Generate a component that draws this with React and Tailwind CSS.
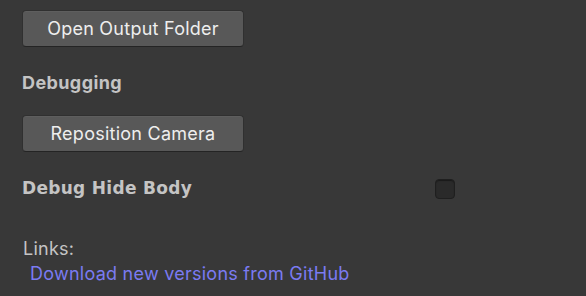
import React, { useState } from 'react';

const UnityButton = ({ children }) => (
  <button
    type="button"
    className="w-[222px] h-[37px] rounded-[4px] bg-[#585858] border border-[#303030] border-b-[#242424] text-[#eeeeee] text-[18px] tracking-[0.25px] leading-none shadow-[inset_0_1px_0_rgba(255,255,255,0.04)]"
  >
    {children}
  </button>
);

const App = () => {
  const [hideBody, setHideBody] = useState(false);

  return (
    <div className="w-[586px] h-[296px] bg-[#383838] pl-[22px] pt-[10px] font-['Inter','Noto_Sans',sans-serif] overflow-hidden">
      <UnityButton>Open Output Folder</UnityButton>

      <div className="mt-[24px] h-[22px] flex items-center text-[18px] tracking-[0.4px] font-bold text-[#c4c4c4]">
        Debugging
      </div>

      <div className="mt-[22px]">
        <UnityButton>Reposition Camera</UnityButton>
      </div>

      <div className="mt-[27px] flex items-center h-[20px]">
        <span className="w-[413px] font-['DejaVu_Sans',sans-serif] text-[17px] tracking-[0.3px] font-bold text-[#c4c4c4]">
          Debug Hide Body
        </span>
        <button
          type="button"
          onClick={() => setHideBody(!hideBody)}
          className="w-[20px] h-[20px] rounded-[4px] bg-[#2a2a2a] border border-[#1f1f1f] shadow-[inset_0_1px_1px_rgba(0,0,0,0.4)]"
        />
      </div>

      <div className="mt-[38px] h-[22px] flex items-center text-[18px] tracking-[0.25px] text-[#c4c4c4] pl-[1px]">
        Links:
      </div>
      <a className="mt-[3px] h-[22px] flex items-center pl-[8px] text-[18px] tracking-[0.25px] text-[#7b7bf2]">
        Download new versions from GitHub
      </a>
    </div>
  );
};

export default App;
